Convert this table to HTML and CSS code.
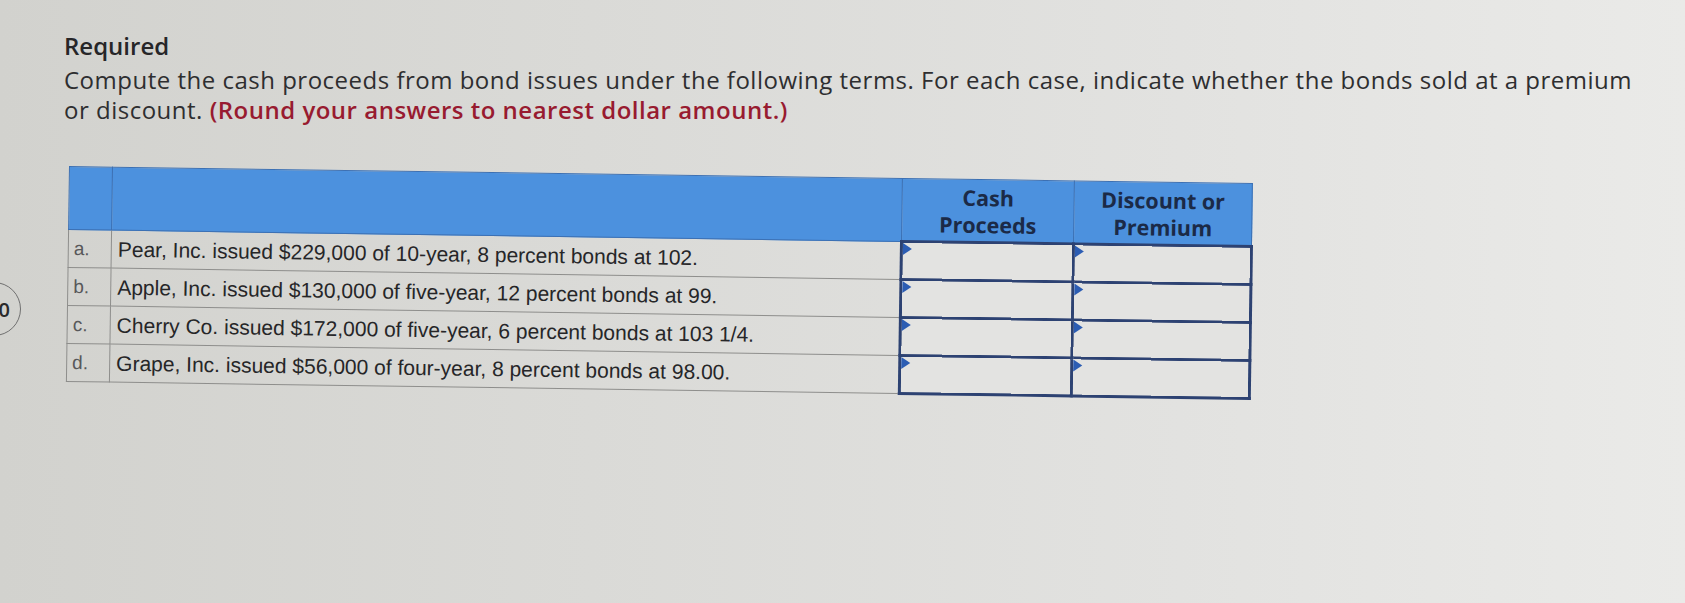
FILE: index.html
```html
<!DOCTYPE html>
<html lang="en">
<head>
<meta charset="utf-8">
<title>Required</title>
<link rel="stylesheet" href="styles.css">
</head>
<body>
<main class="page">
  <h2 class="req">Required</h2>
  <p class="instr">Compute the cash proceeds from bond issues under the following terms. For each case, indicate whether the bonds sold at a premium or discount. <strong class="note">(Round your answers to nearest dollar amount.)</strong></p>
  <table class="grid">
    <colgroup>
      <col class="c-letter"><col class="c-desc"><col class="c-cash"><col class="c-disc">
    </colgroup>
    <thead>
      <tr>
        <th></th>
        <th></th>
        <th>Cash<br>Proceeds</th>
        <th>Discount or<br>Premium</th>
      </tr>
    </thead>
    <tbody>
      <tr>
        <td class="letter">a.</td>
        <td class="desc">Pear, Inc. issued $229,000 of 10-year, 8 percent bonds at 102.</td>
        <td class="input"></td>
        <td class="input"></td>
      </tr>
      <tr>
        <td class="letter">b.</td>
        <td class="desc">Apple, Inc. issued $130,000 of five-year, 12 percent bonds at 99.</td>
        <td class="input"></td>
        <td class="input"></td>
      </tr>
      <tr>
        <td class="letter">c.</td>
        <td class="desc">Cherry Co. issued $172,000 of five-year, 6 percent bonds at 103 1/4.</td>
        <td class="input"></td>
        <td class="input"></td>
      </tr>
      <tr>
        <td class="letter">d.</td>
        <td class="desc">Grape, Inc. issued $56,000 of four-year, 8 percent bonds at 98.00.</td>
        <td class="input"></td>
        <td class="input"></td>
      </tr>
    </tbody>
  </table>
  <div class="badge">0</div>
</main>
</body>
</html>
```

FILE: styles.css
```css
html, body {
  margin: 0;
  padding: 0;
}
body {
  width: 1685px;
  height: 603px;
  overflow: hidden;
  background: linear-gradient(90deg, #d2d2ce 0%, #dadad7 35%, #e2e2e0 70%, #eaeae8 100%);
  font-family: "Open Sans", "Liberation Sans", sans-serif;
  color: #2c2c2e;
}
.page {
  position: relative;
  display: flex;
  flex-direction: column;
  align-items: flex-start;
  padding: 31px 0 0 64px;
  height: 100%;
  box-sizing: border-box;
}
.req {
  margin: 0;
  font-size: 24px;
  line-height: 30px;
  font-weight: 600;
  color: #262628;
}
.instr {
  margin: 4px 0 0 0;
  width: 1590px;
  font-size: 24px;
  line-height: 30px;
  letter-spacing: 0.5px;
  font-weight: 400;
  color: #2e2e30;
}
.note {
  color: #981b30;
  font-weight: 600;
}
.grid {
  margin-top: 41px;
  margin-left: 5px;
  width: 1183px;
  border-collapse: collapse;
  table-layout: fixed;
  transform: rotate(0.82deg);
  transform-origin: 0 0;
  font-family: "Liberation Sans", Arial, sans-serif;
}
.c-letter { width: 43px; }
.c-desc { width: 790px; }
.c-cash { width: 172px; }
.c-disc { width: 178px; }
.grid th {
  height: 61px;
  padding: 0;
  background: #4c91de;
  border: 1px solid #3c70b3;
  font-family: "Open Sans", "Liberation Sans", sans-serif;
  font-size: 21.5px;
  line-height: 27px;
  font-weight: 700;
  color: #1b2a47;
  text-align: center;
  vertical-align: middle;
}
.grid td {
  height: 35px;
  padding: 0;
  border: 1px solid #8e8e8c;
  font-size: 21px;
  color: #262628;
  vertical-align: middle;
  white-space: nowrap;
}
.grid td.letter {
  padding-left: 5px;
  color: #58585a;
  font-size: 19px;
}
.grid td.desc {
  padding-left: 6px;
}
.grid td.input {
  position: relative;
  border: 3px solid #2d4272;
  background: #e3e3e1;
}
.input::before {
  content: "";
  position: absolute;
  left: 0;
  top: 0;
  border-left: 9px solid #2c5db3;
  border-top: 6px solid transparent;
  border-bottom: 6px solid transparent;
}
.badge {
  position: absolute;
  left: -33px;
  top: 282px;
  width: 54px;
  height: 54px;
  box-sizing: border-box;
  border: 1.5px solid #707070;
  border-radius: 50%;
  display: flex;
  align-items: center;
  justify-content: flex-end;
  padding-right: 10px;
  font-family: "Open Sans", sans-serif;
  font-size: 20px;
  font-weight: 600;
  color: #2a2a2a;
}
```
